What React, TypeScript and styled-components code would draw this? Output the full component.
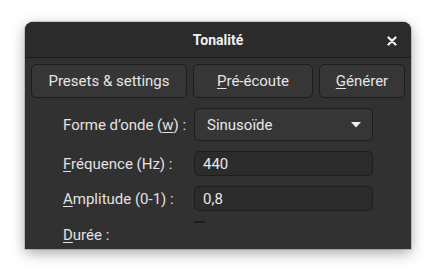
import styled, { createGlobalStyle } from "styled-components";

const GlobalStyle = createGlobalStyle`
  html, body {
    margin: 0;
    padding: 0;
    background: #ffffff;
  }
  body {
    font-family: Roboto, "Noto Sans", "DejaVu Sans", sans-serif;
  }
`;

const Page = styled.div`
  width: 436px;
  height: 277px;
  padding: 22px 0 0 25px;
  box-sizing: border-box;
  overflow: hidden;
`;

const Window = styled.div`
  width: 386px;
  height: 227px;
  background: #313131;
  border-radius: 8px 8px 0 0;
  box-shadow: 0 4px 14px rgba(0, 0, 0, 0.35), 0 0 0 1px rgba(0, 0, 0, 0.15);
  overflow: hidden;
  display: flex;
  flex-direction: column;
  color: #e4e4e4;
`;

const TitleBar = styled.div`
  position: relative;
  height: 36px;
  flex: none;
  display: flex;
  align-items: center;
  justify-content: center;
  padding-top: 1px;
  box-sizing: border-box;
  background: #2b2b2b;
  border-bottom: 1px solid #1c1c1c;
`;

const Title = styled.span`
  font-weight: 700;
  font-size: 14px;
  color: #f0f0f0;
`;

const CloseButton = styled.button`
  position: absolute;
  right: 12px;
  top: 12px;
  width: 14px;
  height: 14px;
  padding: 0;
  border: none;
  background: transparent;
  display: flex;
  align-items: center;
  justify-content: center;
`;

const Toolbar = styled.div`
  display: flex;
  gap: 6px;
  padding: 6px 6px 0;
`;

const Button = styled.button<{ $w: number }>`
  width: ${(p) => p.$w}px;
  height: 34px;
  box-sizing: border-box;
  background: #363636;
  border: 1px solid #1d1d1d;
  border-radius: 5px;
  color: #e4e4e4;
  font-family: inherit;
  font-size: 15px;
  padding: 0;
`;

const Form = styled.div`
  display: grid;
  grid-template-columns: 131px 179px;
  row-gap: 10px;
  padding: 10px 38px 0;
  align-items: center;
`;

const Label = styled.label`
  font-size: 15px;
  color: #e2e2e2;
  white-space: nowrap;
`;

const Combo = styled.div`
  height: 33px;
  box-sizing: border-box;
  background: #363636;
  border: 1px solid #1d1d1d;
  border-radius: 5px;
  display: flex;
  align-items: center;
  justify-content: space-between;
  padding: 0 11px 0 12px;
  font-size: 15px;
  color: #e8e8e8;
`;

const Entry = styled.div`
  height: 25px;
  box-sizing: border-box;
  background: #2b2b2b;
  border: 1px solid #1d1d1d;
  border-radius: 5px;
  display: flex;
  align-items: center;
  padding: 0 8px;
  font-size: 15px;
  color: #e8e8e8;
`;

const Spin = styled.div`
  align-self: start;
  height: 26px;
`;

const Dash = styled.div`
  width: 11px;
  height: 2px;
  background: #1e1e1e;
`;

const Mn = styled.span`
  text-decoration: underline;
  text-underline-offset: 2px;
  text-decoration-thickness: 1px;
`;

const LastLabel = styled(Label)`
  padding-top: 2px;
`;

export default function App() {
  return (
    <>
      <GlobalStyle />
      <Page>
        <Window>
          <TitleBar>
            <Title>Tonalité</Title>
            <CloseButton aria-label="Fermer">
              <svg width="10" height="10" viewBox="0 0 10 10">
                <path d="M1.5 1.5 L8.5 8.5 M8.5 1.5 L1.5 8.5" stroke="#f2f2f2" strokeWidth="2.2" strokeLinecap="round" />
              </svg>
            </CloseButton>
          </TitleBar>
          <Toolbar>
            <Button $w={156}>Presets &amp; settings</Button>
            <Button $w={120}>
              <Mn>P</Mn>ré-écoute
            </Button>
            <Button $w={86}>
              <Mn>G</Mn>énérer
            </Button>
          </Toolbar>
          <Form>
            <Label>
              Forme d’onde (<Mn>w</Mn>) :
            </Label>
            <Combo>
              <span>Sinusoïde</span>
              <svg width="10" height="6" viewBox="0 0 10 6">
                <path d="M0 0 L10 0 L5 5.5 Z" fill="#f0f0f0" />
              </svg>
            </Combo>
            <Label>
              <Mn>F</Mn>réquence (Hz) :
            </Label>
            <Entry>440</Entry>
            <Label>
              <Mn>A</Mn>mplitude (0-1) :
            </Label>
            <Entry>0,8</Entry>
            <LastLabel>
              <Mn>D</Mn>urée :
            </LastLabel>
            <Spin>
              <Dash />
            </Spin>
          </Form>
        </Window>
      </Page>
    </>
  );
}
